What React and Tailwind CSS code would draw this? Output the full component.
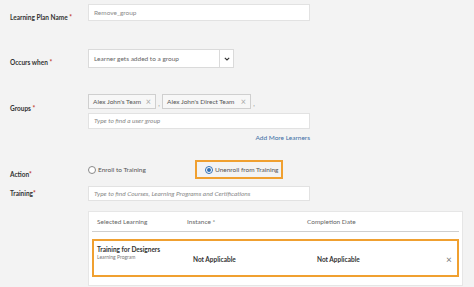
import React from "react";

function Label({ children, pt }) {
  return (
    <div className={`w-[88px] shrink-0 pl-[10px] font-bold text-[#333] leading-[9px] ${pt}`}>
      {children}
    </div>
  );
}

function Chip({ text, w }) {
  return (
    <div className={`${w} h-[15px] flex items-center justify-between px-[4px] bg-[#f7f7f7] border border-[#cfcfcf] text-[#555]`}>
      <span>{text}</span>
      <span className="text-[#aaa] text-[9px] leading-[9px]">×</span>
    </div>
  );
}

export default function App() {
  return (
    <div className="w-[474px] h-[287px] overflow-hidden bg-[#f3f3f3] text-[6.5px] font-['Lato',sans-serif] text-[#444]">
      {/* Learning plan name */}
      <div className="flex pt-[4px]">
        <Label pt="pt-[9px]">
          Learning Plan Name <span className="text-[#c0392b]">*</span>
        </Label>
        <div className="w-[222px] h-[17px] bg-white border border-[#e2e2e2] flex items-center pl-[5px] text-[#8a8a8a]">
          Remove_group
        </div>
      </div>

      {/* Occurs when */}
      <div className="flex mt-[27px]">
        <Label pt="pt-[9px]">
          Occurs when <span className="text-[#c0392b]">*</span>
        </Label>
        <div className="w-[146px] h-[19px] bg-white border border-[#dadada] flex items-center">
          <div className="flex-1 pl-[5px] text-[#666]">Learner gets added to a group</div>
          <div className="w-[14px] h-full border-l border-[#dadada] flex items-center justify-center">
            <svg width="6" height="4" viewBox="0 0 6 4">
              <path d="M0.8 0.8 L3 3 L5.2 0.8" fill="none" stroke="#333" strokeWidth="1.1" />
            </svg>
          </div>
        </div>
      </div>

      {/* Groups */}
      <div className="flex mt-[26px]">
        <Label pt="pt-[10px]">
          Groups <span className="text-[#c0392b]">*</span>
        </Label>
        <div className="w-[222px]">
          <div className="flex items-end">
            <Chip text="Alex John's Team" w="w-[68px]" />
            <span className="w-[6px] text-center text-[#777]">,</span>
            <Chip text="Alex John's Direct Team" w="w-[89px]" />
            <span className="w-[6px] text-center text-[#777]">,</span>
          </div>
          <div className="mt-[4px] h-[16px] bg-white border border-[#e2e2e2] flex items-center pl-[5px] italic text-[#888]">
            Type to find a user group
          </div>
          <div className="mt-[4px] h-[9px] leading-[9px] text-right text-[#3b6ea5]">Add More Learners</div>
        </div>
      </div>

      {/* Action */}
      <div className="flex mt-[18px]">
        <Label pt="pt-[10px]">Action<span className="text-[#c0392b]">*</span></Label>
        <div className="flex items-center h-[19px]">
          <div className="flex items-center w-[107px]">
            <span className="w-[8px] h-[8px] rounded-full border border-[#888] bg-white" />
            <span className="ml-[2px] text-[#555]">Enroll to Training</span>
          </div>
          <div className="w-[88px] h-[19px] border-2 border-[#f0a030] flex items-center pl-[8px]">
            <span className="w-[8px] h-[8px] rounded-full border border-[#2f6fb5] bg-white flex items-center justify-center">
              <span className="w-[4px] h-[4px] rounded-full bg-[#2f6fb5]" />
            </span>
            <span className="ml-[2px] text-[#555]">Unenroll from Training</span>
          </div>
        </div>
      </div>

      {/* Training */}
      <div className="flex mt-[7px]">
        <Label pt="pt-[3px]">Training<span className="text-[#c0392b]">*</span></Label>
        <div className="w-[222px] h-[15px] bg-white border border-[#e2e2e2] flex items-center pl-[5px] italic text-[#888]">
          Type to find Courses, Learning Programs and Certifications
        </div>
      </div>

      {/* Selected table */}
      <div className="ml-[88px] mt-[10px] w-[375px] bg-white border border-[#e6e6e6] px-[3px] pb-[8px]">
        <div className="flex h-[20px] items-center border-b border-[#cfcfcf] text-[#666]">
          <div className="w-[95px] pl-[5px]">Selected Learning</div>
          <div className="w-[120px]">Instance *</div>
          <div>Completion Date</div>
        </div>
        <div className="mt-[7px] h-[38px] border-2 border-[#f0a030] flex items-center text-[#333]">
          <div className="w-[99px] pl-[3px] self-start pt-[4px]">
            <div className="font-bold leading-[9px]">Training for Designers</div>
            <div className="text-[5px] text-[#777] leading-[7px]">Learning Program</div>
          </div>
          <div className="w-[124px] font-bold pt-[3px]">Not Applicable</div>
          <div className="w-[129px] font-bold pt-[3px]">Not Applicable</div>
          <div className="text-[#777] text-[10px] leading-[10px] pt-[2px]">×</div>
        </div>
      </div>
    </div>
  );
}
